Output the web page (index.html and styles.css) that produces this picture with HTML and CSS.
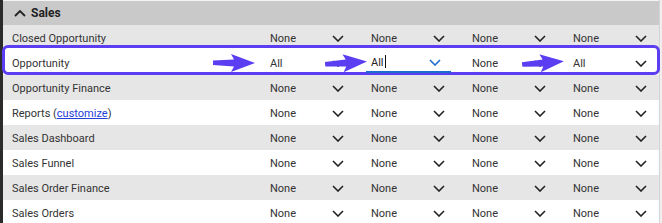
FILE: index.html
```html
<!DOCTYPE html>
<html lang="en">

<head>
    <meta charset="UTF-8">
    <meta name="viewport" content="width=device-width, initial-scale=1.0">
    <title>Sales permissions</title>
    <link rel="stylesheet" href="styles.css">
</head>

<body>
    <div class="rail"></div>

    <div class="panel">
        <div class="group-head">
            <svg class="caret-up" width="12" height="8" viewBox="0 0 12 8"><polyline points="1,7 6,2 11,7" /></svg>
            <span>Sales</span>
        </div>

        <div class="row shade">
            <div class="name">Closed Opportunity</div>
            <div class="pick"><span>None</span><svg class="caret" viewBox="0 0 12 7"><polyline points="1,1 6,6 11,1" /></svg></div>
            <div class="pick"><span>None</span><svg class="caret" viewBox="0 0 12 7"><polyline points="1,1 6,6 11,1" /></svg></div>
            <div class="pick"><span>None</span><svg class="caret" viewBox="0 0 12 7"><polyline points="1,1 6,6 11,1" /></svg></div>
            <div class="pick"><span>None</span><svg class="caret" viewBox="0 0 12 7"><polyline points="1,1 6,6 11,1" /></svg></div>
        </div>

        <div class="row focus">
            <div class="name">Opportunity</div>
            <div class="pick"><span>All</span><svg class="caret" viewBox="0 0 12 7"><polyline points="1,1 6,6 11,1" /></svg></div>
            <div class="pick active"><span>All<i class="cursor"></i></span><svg class="caret" viewBox="0 0 12 7"><polyline points="1,1 6,6 11,1" /></svg></div>
            <div class="pick"><span>None</span><svg class="caret" viewBox="0 0 12 7"><polyline points="1,1 6,6 11,1" /></svg></div>
            <div class="pick"><span>All</span><svg class="caret" viewBox="0 0 12 7"><polyline points="1,1 6,6 11,1" /></svg></div>

            <!-- annotation arrows -->
            <svg class="arrow arrow-1" viewBox="0 0 42 18"><polygon points="0,6.5 21,5.5 18,0 42,9 18,18 21,12.5 0,11" /></svg>
            <svg class="arrow arrow-2" viewBox="0 0 42 18"><polygon points="0,6.5 21,5.5 18,0 42,9 18,18 21,12.5 0,11" /></svg>
            <svg class="arrow arrow-3" viewBox="0 0 42 18"><polygon points="0,6.5 21,5.5 18,0 42,9 18,18 21,12.5 0,11" /></svg>
        </div>

        <div class="row shade">
            <div class="name">Opportunity Finance</div>
            <div class="pick"><span>None</span><svg class="caret" viewBox="0 0 12 7"><polyline points="1,1 6,6 11,1" /></svg></div>
            <div class="pick"><span>None</span><svg class="caret" viewBox="0 0 12 7"><polyline points="1,1 6,6 11,1" /></svg></div>
            <div class="pick"><span>None</span><svg class="caret" viewBox="0 0 12 7"><polyline points="1,1 6,6 11,1" /></svg></div>
            <div class="pick"><span>None</span><svg class="caret" viewBox="0 0 12 7"><polyline points="1,1 6,6 11,1" /></svg></div>
        </div>

        <div class="row">
            <div class="name">Reports (<a href="#">customize</a>)</div>
            <div class="pick"><span>None</span><svg class="caret" viewBox="0 0 12 7"><polyline points="1,1 6,6 11,1" /></svg></div>
            <div class="pick"><span>None</span><svg class="caret" viewBox="0 0 12 7"><polyline points="1,1 6,6 11,1" /></svg></div>
            <div class="pick"><span>None</span><svg class="caret" viewBox="0 0 12 7"><polyline points="1,1 6,6 11,1" /></svg></div>
            <div class="pick"><span>None</span><svg class="caret" viewBox="0 0 12 7"><polyline points="1,1 6,6 11,1" /></svg></div>
        </div>

        <div class="row shade">
            <div class="name">Sales Dashboard</div>
            <div class="pick"><span>None</span><svg class="caret" viewBox="0 0 12 7"><polyline points="1,1 6,6 11,1" /></svg></div>
            <div class="pick"><span>None</span><svg class="caret" viewBox="0 0 12 7"><polyline points="1,1 6,6 11,1" /></svg></div>
            <div class="pick"><span>None</span><svg class="caret" viewBox="0 0 12 7"><polyline points="1,1 6,6 11,1" /></svg></div>
            <div class="pick"><span>None</span><svg class="caret" viewBox="0 0 12 7"><polyline points="1,1 6,6 11,1" /></svg></div>
        </div>

        <div class="row">
            <div class="name">Sales Funnel</div>
            <div class="pick"><span>None</span><svg class="caret" viewBox="0 0 12 7"><polyline points="1,1 6,6 11,1" /></svg></div>
            <div class="pick"><span>None</span><svg class="caret" viewBox="0 0 12 7"><polyline points="1,1 6,6 11,1" /></svg></div>
            <div class="pick"><span>None</span><svg class="caret" viewBox="0 0 12 7"><polyline points="1,1 6,6 11,1" /></svg></div>
            <div class="pick"><span>None</span><svg class="caret" viewBox="0 0 12 7"><polyline points="1,1 6,6 11,1" /></svg></div>
        </div>

        <div class="row shade">
            <div class="name">Sales Order Finance</div>
            <div class="pick"><span>None</span><svg class="caret" viewBox="0 0 12 7"><polyline points="1,1 6,6 11,1" /></svg></div>
            <div class="pick"><span>None</span><svg class="caret" viewBox="0 0 12 7"><polyline points="1,1 6,6 11,1" /></svg></div>
            <div class="pick"><span>None</span><svg class="caret" viewBox="0 0 12 7"><polyline points="1,1 6,6 11,1" /></svg></div>
            <div class="pick"><span>None</span><svg class="caret" viewBox="0 0 12 7"><polyline points="1,1 6,6 11,1" /></svg></div>
        </div>

        <div class="row">
            <div class="name">Sales Orders</div>
            <div class="pick"><span>None</span><svg class="caret" viewBox="0 0 12 7"><polyline points="1,1 6,6 11,1" /></svg></div>
            <div class="pick"><span>None</span><svg class="caret" viewBox="0 0 12 7"><polyline points="1,1 6,6 11,1" /></svg></div>
            <div class="pick"><span>None</span><svg class="caret" viewBox="0 0 12 7"><polyline points="1,1 6,6 11,1" /></svg></div>
            <div class="pick"><span>None</span><svg class="caret" viewBox="0 0 12 7"><polyline points="1,1 6,6 11,1" /></svg></div>
        </div>
    </div>

    <div class="scroll"></div>
</body>

</html>
```

FILE: styles.css
```css
* {
    margin: 0;
    padding: 0;
    box-sizing: border-box;
}

body {
    font-family: Roboto, 'Liberation Sans', sans-serif;
    font-size: 11px;
    color: #333;
    background-color: #fff;
    display: flex;
    height: 223px;
    overflow: hidden;
}

.rail {
    width: 3px;
    flex-shrink: 0;
    background-color: #2b2b2b;
}

.scroll {
    width: 3px;
    flex-shrink: 0;
    background-color: #efefef;
    border-left: 1px solid #d4d4d4;
}

.panel {
    flex: 1;
    padding-top: 1px;
    background-color: #f4f4f4;
}

.group-head {
    height: 24px;
    display: flex;
    align-items: center;
    gap: 5px;
    padding-left: 11px;
    background-color: #c9c9c9;
    font-size: 12px;
    font-weight: bold;
    color: #222;
}

.caret-up {
    fill: none;
    stroke: #222;
    stroke-width: 1.8;
}

.row {
    height: 25px;
    padding-top: 1px;
    display: grid;
    grid-template-columns: 259px repeat(3, 101px) 1fr;
    align-items: center;
    background-color: #fff;
}

.row.shade {
    background-color: #e6e6e6;
}

.name {
    padding-left: 9px;
}

.name a {
    color: #2540d8;
}

.pick {
    width: 85px;
    height: 20px;
    margin-left: 3px;
    padding: 0 6px 0 5px;
    display: flex;
    align-items: center;
    justify-content: space-between;
}

.caret {
    width: 12px;
    height: 7px;
    fill: none;
    stroke: #222;
    stroke-width: 1.6;
}

.pick.active {
    border-bottom: 2px solid #1a6ccf;
    color: #222;
}

.pick.active .caret {
    stroke: #1a6ccf;
    margin-right: 4px;
}

.cursor {
    display: inline-block;
    width: 1px;
    height: 13px;
    margin-left: 1px;
    vertical-align: -2px;
    background-color: #111;
}

/* highlighted row with annotations */
.focus {
    position: relative;
    z-index: 1;
}

.focus::before {
    content: '';
    position: absolute;
    top: -5px;
    bottom: 0;
    left: -1px;
    right: -1px;
    border: 3px solid #5b3ef2;
    border-radius: 6px;
    background-color: #fff;
    z-index: -1;
}

.arrow {
    position: absolute;
    width: 42px;
    height: 18px;
    fill: #5b3ef2;
}

.arrow-1 {
    left: 210px;
    top: 4px;
}

.arrow-2 {
    left: 322px;
    top: 4px;
    transform: rotate(-4deg);
}

.arrow-3 {
    left: 519px;
    top: 4px;
    transform: rotate(-5deg);
}
```
